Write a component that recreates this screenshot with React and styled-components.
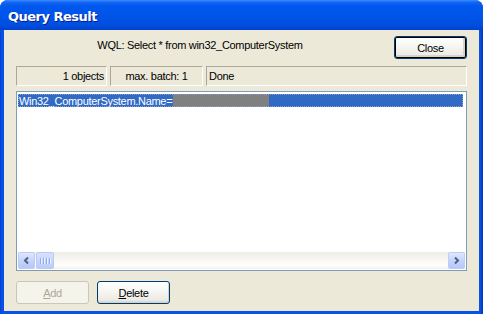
import React from "react";
import styled, { createGlobalStyle } from "styled-components";

const Global = createGlobalStyle`
  html, body { margin: 0; padding: 0; background: #ffffff; }
  body { font-family: "Liberation Sans", Arial, sans-serif; }
`;

const Window = styled.div`
  width: 483px;
  height: 314px;
  box-sizing: border-box;
  display: flex;
  flex-direction: column;
  border-radius: 8px 8px 0 0;
  background: #0842d6;
  overflow: hidden;
`;

const TitleBar = styled.div`
  height: 30px;
  flex: none;
  display: flex;
  align-items: center;
  padding-left: 8px;
  padding-top: 3px;
  box-sizing: border-box;
  background: linear-gradient(
    to bottom,
    #3b8cff 0%,
    #1266f4 8%,
    #0058ee 20%,
    #0054e8 55%,
    #0050e0 80%,
    #0148d8 92%,
    #003fc8 100%
  );
  color: #ffffff;
  font-family: "DejaVu Sans", "Liberation Sans", sans-serif;
  font-weight: bold;
  font-size: 13px;
  text-shadow: 1px 1px 0 #0a1e8c;
  letter-spacing: -0.5px;
`;

const Frame = styled.div`
  flex: 1;
  display: flex;
  padding: 0 4px 3px 4px;
  background: linear-gradient(to right, #0a3ed0, #0952e8 2px, #0952e8 calc(100% - 3px), #0034b8);
`;

const Client = styled.div`
  flex: 1;
  background: #ece9d8;
  padding: 6px 12px 0 12px;
  display: flex;
  flex-direction: column;
  font-size: 11px;
  letter-spacing: -0.3px;
  color: #000000;
`;

const TopRow = styled.div`
  display: flex;
  align-items: center;
  height: 23px;
`;

const Query = styled.div`
  flex: 1;
  text-align: center;
  padding-right: 10px;
  margin-top: -5px;
`;

const Button = styled.button`
  width: 73px;
  height: 23px;
  box-sizing: border-box;
  font-family: "Liberation Sans", Arial, sans-serif;
  font-size: 11px;
  letter-spacing: -0.3px;
  padding: 0;
  border-radius: 3px;
  border: 1px solid ${(p) => (p.$disabled ? "#c9c7ba" : "#003c74")};
  color: ${(p) => (p.$disabled ? "#aca899" : "#000000")};
  background: ${(p) =>
    p.$disabled
      ? "#f5f4ea"
      : "linear-gradient(to bottom, #ffffff 0%, #f7f7f3 40%, #ecebe6 85%, #d6d0c5 100%)"};
  box-shadow: ${(p) =>
    p.$default
      ? "inset 0 0 0 1px #000000, inset -1px -1px 0 2px #d8d3c6"
      : p.$disabled
      ? "none"
      : "inset -1px -1px 0 0 #d6d0c5"};
  u { text-decoration: underline; }
`;

const StatusRow = styled.div`
  display: flex;
  gap: 3px;
  margin-top: 7px;
  height: 20px;
`;

const Cell = styled.div`
  width: ${(p) => p.$w || "auto"};
  flex: ${(p) => (p.$grow ? 1 : "none")};
  box-sizing: border-box;
  border-top: 1px solid #aca899;
  border-left: 1px solid #aca899;
  border-right: 1px solid #ffffff;
  border-bottom: 1px solid #ffffff;
  display: flex;
  align-items: center;
  justify-content: ${(p) => p.$align || "flex-start"};
  padding: 0 2px 1px 2px;
  white-space: nowrap;
`;

const ListBox = styled.div`
  margin-top: 5px;
  height: 180px;
  box-sizing: border-box;
  border: 1px solid #7f9db9;
  background: #ffffff;
  display: flex;
  flex-direction: column;
  padding: 2px 1px 1px 1px;
`;

const Items = styled.div`
  flex: 1;
`;

const SelectedRow = styled.div`
  height: 13px;
  display: flex;
  align-items: center;
  margin-right: 2px;
  outline: 1px dotted #8a9fc8;
  outline-offset: -1px;
  color: #ffffff;
  white-space: nowrap;
`;

const Sel = styled.span`
  background: #316ac5;
  height: 100%;
  display: flex;
  align-items: center;
  padding-left: 1px;
  box-sizing: border-box;
  overflow: hidden;
  flex: ${(p) => (p.$grow ? 1 : "none")};
  width: ${(p) => p.$w || "auto"};
`;

const Redact = styled.span`
  background: #808080;
  width: 96px;
  height: 100%;
`;

const HScroll = styled.div`
  height: 17px;
  display: flex;
  align-items: stretch;
  background: linear-gradient(to bottom, #eeede5 0%, #f3f1ec 20%, #fefefb 80%, #f3f1ec 100%);
`;

const Arrow = styled.div`
  width: 17px;
  box-sizing: border-box;
  border: 1px solid #bccdf9;
  border-radius: 2px;
  background: linear-gradient(to bottom, #dfe8fe 0%, #c6d4fb 50%, #b6c8f7 100%);
  display: flex;
  align-items: center;
  justify-content: center;
`;

const Thumb = styled.div`
  width: 18px;
  margin-left: 1px;
  box-sizing: border-box;
  border: 1px solid #b8caf5;
  border-radius: 2px;
  background: linear-gradient(to bottom, #d6e2fd 0%, #c7d6fb 50%, #bcccf7 100%);
  display: flex;
  align-items: center;
  justify-content: center;
  gap: 1px;
`;

const Grip = styled.span`
  width: 1px;
  height: 6px;
  background: #8fa8ec;
  box-shadow: 1px 0 0 #eef3ff;
  margin-right: 1px;
`;

const Track = styled.div`
  flex: 1;
`;

const BottomRow = styled.div`
  display: flex;
  gap: 8px;
  margin-top: 10px;
`;

const ArrowIcon = ({ dir }) => (
  <svg width="9" height="9" viewBox="0 0 9 9">
    {dir === "left" ? (
      <path d="M6 1.5 L3 4.5 L6 7.5" stroke="#4d6185" strokeWidth="2" fill="none" />
    ) : (
      <path d="M3 1.5 L6 4.5 L3 7.5" stroke="#4d6185" strokeWidth="2" fill="none" />
    )}
  </svg>
);

export default function App() {
  return (
    <>
      <Global />
      <Window>
        <TitleBar>Query Result</TitleBar>
        <Frame>
          <Client>
            <TopRow>
              <Query>WQL: Select * from win32_ComputerSystem</Query>
              <Button $default>Close</Button>
            </TopRow>
            <StatusRow>
              <Cell $w="91px" $align="flex-end">1 objects</Cell>
              <Cell $w="93px" $align="center">max. batch: 1</Cell>
              <Cell $grow>Done</Cell>
            </StatusRow>
            <ListBox>
              <Items>
                <SelectedRow>
                  <Sel $w="155px">Win32_ComputerSystem.Name=</Sel>
                  <Redact />
                  <Sel $grow />
                </SelectedRow>
              </Items>
              <HScroll>
                <Arrow>
                  <ArrowIcon dir="left" />
                </Arrow>
                <Thumb>
                  <Grip />
                  <Grip />
                  <Grip />
                  <Grip />
                </Thumb>
                <Track />
                <Arrow>
                  <ArrowIcon dir="right" />
                </Arrow>
              </HScroll>
            </ListBox>
            <BottomRow>
              <Button $disabled>
                <u>A</u>dd
              </Button>
              <Button>
                <u>D</u>elete
              </Button>
            </BottomRow>
          </Client>
        </Frame>
      </Window>
    </>
  );
}
